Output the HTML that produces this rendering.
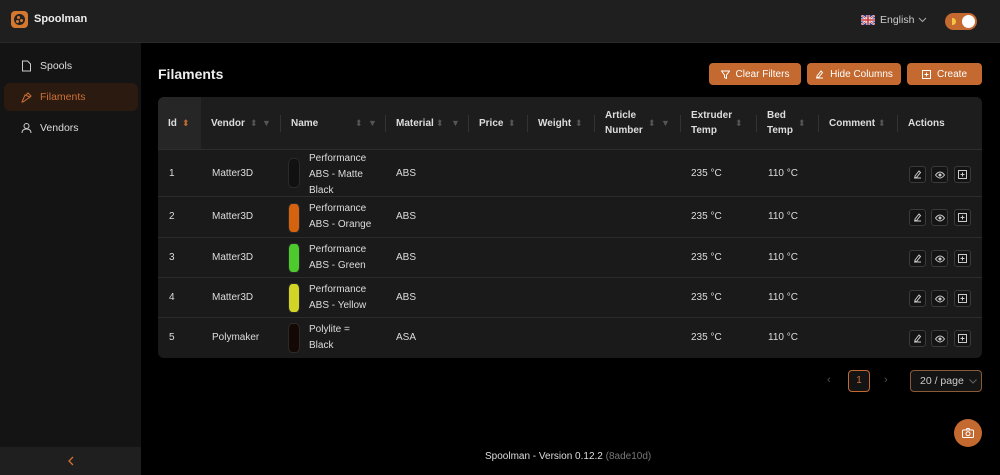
<!DOCTYPE html>
<html><head><meta charset="utf-8"><style>
*{box-sizing:border-box;margin:0;padding:0}
body{width:1000px;height:475px;background:#000;font-family:"Liberation Sans",sans-serif;color:#e0e0e0;font-size:10px;position:relative;overflow:hidden}
.hdr{position:absolute;left:0;top:0;width:1000px;height:43px;background:#1f1f1f;border-bottom:1px solid #2a2a2a}
.side{position:absolute;left:0;top:43px;width:141px;height:432px;background:#141414}
.side .it{position:absolute;left:4px;width:134px;height:28px;border-radius:6px;display:flex;align-items:center;padding-left:17px;font-size:10.5px;color:#ddd}
.side .it svg{margin-right:8px}
.side .act{background:#2a1a10;color:#d07035}
.collapse{position:absolute;left:0;bottom:0;width:141px;height:28px;background:#1f1f1f;display:flex;justify-content:center;align-items:center}
h1{position:absolute;left:158px;top:66px;font-size:14px;font-weight:bold;color:#eee}
.btn{position:absolute;top:63px;height:22px;background:#c4692f;border-radius:4px;color:#fff;font-size:10px;display:flex;align-items:center;justify-content:center;gap:6px}
.tbl{position:absolute;left:158px;top:97px;width:824px;height:261px;background:#1a1a1a;border-radius:6px;overflow:hidden}
.th{position:absolute;top:0;height:53px;background:#1d1d1d;border-bottom:1px solid #2d2d2d;font-weight:bold;font-size:10px;color:#ddd;display:flex;align-items:center;padding-left:10px;line-height:15px}
.ic{position:absolute;top:21px;color:#555;font-size:9px;font-weight:normal}
.sep{position:absolute;top:18px;width:1px;height:17px;background:#333}
.row{position:absolute;left:0;width:824px;border-bottom:1px solid #2b2b2b}
.c{position:absolute;font-size:10px;color:#ddd;line-height:16px}
.ab{position:absolute;width:17px;height:17px;border:1px solid #3a3a3a;border-radius:3px;background:#141414;display:flex;align-items:center;justify-content:center}
.spool{position:absolute;width:12px;height:30px;border-radius:4px/6px;border:1px solid #2a2a2a}
</style></head><body>
<div class="hdr">
 <div style="position:absolute;left:11px;top:11px;width:17px;height:17px;border-radius:4px;background:#d4772f"><div style="position:absolute;left:3px;top:3px;width:11px;height:11px;border-radius:50%;background:#222"></div><div style="position:absolute;left:6px;top:5px;width:3px;height:3px;border-radius:50%;background:#d4772f"></div><div style="position:absolute;left:9px;top:8px;width:3px;height:3px;border-radius:50%;background:#d4772f"></div><div style="position:absolute;left:5px;top:9px;width:3px;height:3px;border-radius:50%;background:#d4772f"></div></div>
 <div style="position:absolute;left:34px;top:13px;font-weight:bold;font-size:11px;color:#eee">Spoolman</div>
 <svg style="position:absolute;left:861px;top:15px" width="14" height="10"><rect width="14" height="10" fill="#2a3f8f"/><path d="M0 0L14 10M14 0L0 10" stroke="#fff" stroke-width="2"/><path d="M0 0L14 10M14 0L0 10" stroke="#c33" stroke-width=".8"/><path d="M7 0v10M0 5h14" stroke="#fff" stroke-width="3"/><path d="M7 0v10M0 5h14" stroke="#c33" stroke-width="1.6"/></svg>
 <div style="position:absolute;left:880px;top:14px;font-size:10.5px;color:#ccc">English</div>
 <svg style="position:absolute;left:918px;top:17px" width="9" height="6"><path d="M1 1l3.5 3.5L8 1" stroke="#aaa" fill="none"/></svg>
 <div style="position:absolute;left:945px;top:13px;width:32px;height:17px;border-radius:9px;background:#c4692f"><div style="position:absolute;left:17px;top:2px;width:13px;height:13px;border-radius:50%;background:#fff"></div><div style="position:absolute;left:7px;top:5px;width:4px;height:7px;border-radius:0 4px 4px 0;background:#f4c542"></div></div>
</div>
<div class="side">
 <div class="it" style="top:9px"><svg width="11" height="12"><path d="M1.5 1h5l3 3v7h-8z" stroke="#ccc" fill="none"/></svg>Spools</div>
 <div class="it act" style="top:40px"><svg width="11" height="11"><path d="M1 10l3-7 5 2-7 5z M5 3l2-2 3 3-2 2" stroke="#d07035" fill="none"/></svg>Filaments</div>
 <div class="it" style="top:71px"><svg width="11" height="12"><circle cx="5.5" cy="4" r="2.5" stroke="#ccc" fill="none"/><path d="M1 11c0-3 2-4 4.5-4s4.5 1 4.5 4" stroke="#ccc" fill="none"/></svg>Vendors</div>
 <div class="collapse"><svg width="7" height="10"><path d="M6 1L2 5l4 4" stroke="#d07035" stroke-width="1.3" fill="none"/></svg></div>
</div>
<h1>Filaments</h1>
<div class="btn" style="left:709px;width:92px"><svg width="9" height="9"><path d="M.5 1h8L5.5 5v3.5l-2-1V5z" stroke="#fff" fill="none"/></svg>Clear Filters</div>
<div class="btn" style="left:807px;width:94px"><svg width="9" height="9"><path d="M1 8h7M2 6l4-5 1.5 1.5-4 5H2z" stroke="#fff" fill="none"/></svg>Hide Columns</div>
<div class="btn" style="left:907px;width:75px"><svg width="9" height="9"><rect x=".5" y=".5" width="8" height="8" stroke="#fff" fill="none"/><path d="M4.5 2.5v4M2.5 4.5h4" stroke="#fff"/></svg>Create</div>
<div class="tbl">
 <div class="th" style="left:0;width:43px;background:#262626">Id</div><span class="ic" style="left:24px;color:#c4692f">⬍</span>
 <div class="th" style="left:43px;width:80px">Vendor</div><span class="ic" style="left:92px">⬍</span><span class="ic" style="left:104px">▼</span>
 <div class="th" style="left:123px;width:105px">Name</div><span class="ic" style="left:197px">⬍</span><span class="ic" style="left:210px">▼</span>
 <div class="th" style="left:228px;width:83px">Material</div><span class="ic" style="left:278px">⬍</span><span class="ic" style="left:293px">▼</span>
 <div class="th" style="left:311px;width:59px">Price</div><span class="ic" style="left:350px">⬍</span>
 <div class="th" style="left:370px;width:67px">Weight</div><span class="ic" style="left:417px">⬍</span>
 <div class="th" style="left:437px;width:86px">Article<br>Number</div><span class="ic" style="left:490px">⬍</span><span class="ic" style="left:503px">▼</span>
 <div class="th" style="left:523px;width:76px">Extruder<br>Temp</div><span class="ic" style="left:577px">⬍</span>
 <div class="th" style="left:599px;width:62px">Bed<br>Temp</div><span class="ic" style="left:640px">⬍</span>
 <div class="th" style="left:661px;width:79px">Comment</div><span class="ic" style="left:720px">⬍</span>
 <div class="th" style="left:740px;width:84px">Actions</div>
 <div class="sep" style="left:122px"></div><div class="sep" style="left:227px"></div><div class="sep" style="left:310px"></div><div class="sep" style="left:369px"></div><div class="sep" style="left:436px"></div><div class="sep" style="left:522px"></div><div class="sep" style="left:598px"></div><div class="sep" style="left:660px"></div><div class="sep" style="left:739px"></div>
 <div class="row" style="top:53px;height:47px"></div>
 <div class="row" style="top:100px;height:41px"></div>
 <div class="row" style="top:141px;height:40px"></div>
 <div class="row" style="top:181px;height:40px"></div>
</div>
<div class="c" style="left:169px;top:166px">1</div><div class="c" style="left:212px;top:166px">Matter3D</div>
<div class="spool" style="left:288px;top:158px;background:#111"></div>
<div class="c" style="left:309px;top:151px">Performance<br>ABS - Matte<br>Black</div>
<div class="c" style="left:396px;top:166px">ABS</div><div class="c" style="left:691px;top:166px">235 °C</div><div class="c" style="left:768px;top:166px">110 °C</div>
<div class="c" style="left:169px;top:209px">2</div><div class="c" style="left:212px;top:209px">Matter3D</div>
<div class="spool" style="left:288px;top:203px;background:#d4620f"></div>
<div class="c" style="left:309px;top:201px">Performance<br>ABS - Orange</div>
<div class="c" style="left:396px;top:209px">ABS</div><div class="c" style="left:691px;top:209px">235 °C</div><div class="c" style="left:768px;top:209px">110 °C</div>
<div class="c" style="left:169px;top:250px">3</div><div class="c" style="left:212px;top:250px">Matter3D</div>
<div class="spool" style="left:288px;top:243px;background:#4ecb2c"></div>
<div class="c" style="left:309px;top:242px">Performance<br>ABS - Green</div>
<div class="c" style="left:396px;top:250px">ABS</div><div class="c" style="left:691px;top:250px">235 °C</div><div class="c" style="left:768px;top:250px">110 °C</div>
<div class="c" style="left:169px;top:290px">4</div><div class="c" style="left:212px;top:290px">Matter3D</div>
<div class="spool" style="left:288px;top:283px;background:#d3d526"></div>
<div class="c" style="left:309px;top:282px">Performance<br>ABS - Yellow</div>
<div class="c" style="left:396px;top:290px">ABS</div><div class="c" style="left:691px;top:290px">235 °C</div><div class="c" style="left:768px;top:290px">110 °C</div>
<div class="c" style="left:169px;top:330px">5</div><div class="c" style="left:212px;top:330px">Polymaker</div>
<div class="spool" style="left:288px;top:323px;background:#140805"></div>
<div class="c" style="left:309px;top:322px">Polylite =<br>Black</div>
<div class="c" style="left:396px;top:330px">ASA</div><div class="c" style="left:691px;top:330px">235 °C</div><div class="c" style="left:768px;top:330px">110 °C</div>
<!-- action buttons -->
<div id="acts"></div>
<div class="ab" style="left:909px;top:166px"><svg width="9" height="9"><path d="M1 8h7M2 6l4-5 1.5 1.5-4 5H2z" stroke="#ccc" fill="none"/></svg></div><div class="ab" style="left:931px;top:166px"><svg width="10" height="8"><path d="M.5 4Q5-2 9.5 4Q5 10 .5 4z" stroke="#ccc" fill="none"/><circle cx="5" cy="4" r="1.5" fill="#ccc"/></svg></div><div class="ab" style="left:954px;top:166px"><svg width="9" height="9"><rect x=".5" y=".5" width="8" height="8" stroke="#ccc" fill="none"/><path d="M4.5 2.5v4M2.5 4.5h4" stroke="#ccc"/></svg></div>
<div class="ab" style="left:909px;top:209px"><svg width="9" height="9"><path d="M1 8h7M2 6l4-5 1.5 1.5-4 5H2z" stroke="#ccc" fill="none"/></svg></div><div class="ab" style="left:931px;top:209px"><svg width="10" height="8"><path d="M.5 4Q5-2 9.5 4Q5 10 .5 4z" stroke="#ccc" fill="none"/><circle cx="5" cy="4" r="1.5" fill="#ccc"/></svg></div><div class="ab" style="left:954px;top:209px"><svg width="9" height="9"><rect x=".5" y=".5" width="8" height="8" stroke="#ccc" fill="none"/><path d="M4.5 2.5v4M2.5 4.5h4" stroke="#ccc"/></svg></div>
<div class="ab" style="left:909px;top:250px"><svg width="9" height="9"><path d="M1 8h7M2 6l4-5 1.5 1.5-4 5H2z" stroke="#ccc" fill="none"/></svg></div><div class="ab" style="left:931px;top:250px"><svg width="10" height="8"><path d="M.5 4Q5-2 9.5 4Q5 10 .5 4z" stroke="#ccc" fill="none"/><circle cx="5" cy="4" r="1.5" fill="#ccc"/></svg></div><div class="ab" style="left:954px;top:250px"><svg width="9" height="9"><rect x=".5" y=".5" width="8" height="8" stroke="#ccc" fill="none"/><path d="M4.5 2.5v4M2.5 4.5h4" stroke="#ccc"/></svg></div>
<div class="ab" style="left:909px;top:290px"><svg width="9" height="9"><path d="M1 8h7M2 6l4-5 1.5 1.5-4 5H2z" stroke="#ccc" fill="none"/></svg></div><div class="ab" style="left:931px;top:290px"><svg width="10" height="8"><path d="M.5 4Q5-2 9.5 4Q5 10 .5 4z" stroke="#ccc" fill="none"/><circle cx="5" cy="4" r="1.5" fill="#ccc"/></svg></div><div class="ab" style="left:954px;top:290px"><svg width="9" height="9"><rect x=".5" y=".5" width="8" height="8" stroke="#ccc" fill="none"/><path d="M4.5 2.5v4M2.5 4.5h4" stroke="#ccc"/></svg></div>
<div class="ab" style="left:909px;top:330px"><svg width="9" height="9"><path d="M1 8h7M2 6l4-5 1.5 1.5-4 5H2z" stroke="#ccc" fill="none"/></svg></div><div class="ab" style="left:931px;top:330px"><svg width="10" height="8"><path d="M.5 4Q5-2 9.5 4Q5 10 .5 4z" stroke="#ccc" fill="none"/><circle cx="5" cy="4" r="1.5" fill="#ccc"/></svg></div><div class="ab" style="left:954px;top:330px"><svg width="9" height="9"><rect x=".5" y=".5" width="8" height="8" stroke="#ccc" fill="none"/><path d="M4.5 2.5v4M2.5 4.5h4" stroke="#ccc"/></svg></div>
<div style="position:absolute;left:827px;top:374px;color:#555;font-size:11px">‹</div>
<div style="position:absolute;left:848px;top:370px;width:22px;height:22px;border:1px solid #c4692f;border-radius:4px;color:#d07035;font-size:10px;text-align:center;line-height:20px;background:#141414">1</div>
<div style="position:absolute;left:884px;top:374px;color:#555;font-size:11px">›</div>
<div style="position:absolute;left:910px;top:370px;width:72px;height:22px;border:1px solid #8a5a38;border-radius:4px;color:#ccc;font-size:10.5px;line-height:20px;padding-left:9px;background:#141414">20 / page<svg style="position:absolute;left:58px;top:8px" width="8" height="5"><path d="M.5.5l3.5 3.5L7.5.5" stroke="#666" fill="none"/></svg></div>
<div style="position:absolute;left:954px;top:419px;width:28px;height:28px;border-radius:50%;background:#c4692f"><svg style="position:absolute;left:8px;top:9px" width="12" height="10"><rect x=".5" y="2" width="11" height="7.5" rx="1" stroke="#fff" fill="none"/><circle cx="6" cy="5.7" r="2" stroke="#fff" fill="none"/><path d="M4 2l1-1.5h2L8 2" stroke="#fff" fill="none"/></svg></div>
<div style="position:absolute;left:485px;top:451px;font-size:10px;color:#ddd">Spoolman - Version 0.12.2 <span style="color:#777">(8ade10d)</span></div>
</body></html>
